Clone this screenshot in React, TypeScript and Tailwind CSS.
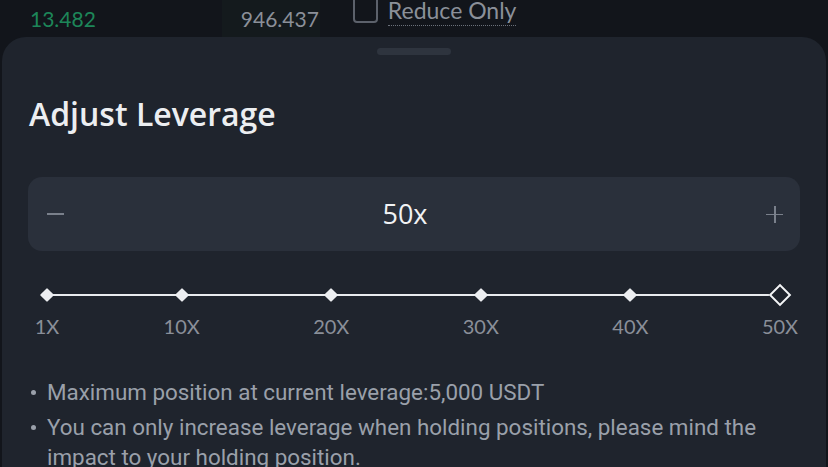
import React from "react";

const marks = [1, 10, 20, 30, 40, 50];

export default function App() {
  const left = 47;
  const right = 780;
  const pos = (v: number) => left + ((v - 1) / 49) * (right - left);
  return (
    <div className="w-[828px] h-[467px] overflow-hidden bg-[#12151b]" style={{ fontFamily: "Lato, 'Noto Sans', sans-serif" }}>
      {/* top strip */}
      <div className="h-[37px] flex items-start relative">
        <div className="ml-[30px] mt-[6px] text-[21px] leading-[26px] text-[#1d8659]">13.482</div>
        <div className="ml-[126px] w-[98px] h-[37px] bg-[#141a1d] flex items-center justify-end pr-[1px] text-[21px] text-[#8b9099]">946.437</div>
        <div className="ml-[33px] -mt-[4px] w-[25px] h-[27px] border-2 border-[#5c616b] rounded-[4px]" />
        <div className="ml-[10px] -mt-[2px] text-[23px] leading-[24px] pb-[3px] text-[#8b9099] border-b border-dotted border-[#6b717b]">Reduce Only</div>
      </div>
      {/* sheet */}
      <div className="mx-[2px] h-[440px] bg-[#1f242d] rounded-t-[24px] flex flex-col">
        <div className="flex justify-center pt-[11px]">
          <div className="w-[74px] h-[7px] rounded-full bg-[#2e343e]" />
        </div>
        <div className="ml-[27px] mt-[41px] text-[32px] leading-[36px] font-semibold text-[#eceef1]" style={{ fontFamily: "'Open Sans', sans-serif" }}>Adjust Leverage</div>
        <div className="mx-[26px] mt-[45px] h-[74px] rounded-[14px] bg-[#2a303b] flex items-center pl-[19px] pr-[17px]">
          <div className="w-[17px] h-[2px] bg-[#7a808b]" />
          <div className="flex-1 text-center pr-[20px] text-[27px] font-medium text-[#f1f2f4]" style={{ fontFamily: "'Open Sans', sans-serif" }}>50x</div>
          <div className="relative w-[17px] h-[17px]">
            <div className="absolute left-0 top-[8px] w-[17px] h-[1.5px] bg-[#7a808b]" />
            <div className="absolute top-0 left-[8px] h-[17px] w-[1.5px] bg-[#7a808b]" />
          </div>
        </div>
        {/* slider */}
        <div className="relative mt-[33px] h-[60px]">
          <div className="absolute top-[10px] h-[2px] bg-[#e9ebee]" style={{ left: left - 2, width: right - left }} />
          {marks.map((m, i) => {
            const x = pos(m) - 2;
            const last = i === marks.length - 1;
            return (
              <React.Fragment key={m}>
                {last ? (
                  <div className="absolute top-[3px] w-[16px] h-[16px] rotate-45 border-2 border-[#f4f5f7] bg-[#1f242d]" style={{ left: x - 8 }} />
                ) : (
                  <div className="absolute top-[6px] w-[10px] h-[10px] rotate-45 bg-[#eceef1] rounded-[1px]" style={{ left: x - 5 }} />
                )}
                <div className="absolute top-[30px] w-[60px] text-center text-[20px] leading-[24px] text-[#8a8f99]" style={{ left: x - 30 }}>
                  {m}X
                </div>
              </React.Fragment>
            );
          })}
        </div>
        <ul className="mt-[33px] ml-[29px] mr-[60px] text-[22.4px] leading-[30px] text-[#9aa0aa]" style={{ fontFamily: "Roboto, sans-serif" }}>
          <li className="flex">
            <span className="w-[16px] shrink-0 h-[30px] flex items-center">
              <span className="block w-[5px] h-[5px] rounded-full bg-[#9aa0aa]" />
            </span>
            <span>Maximum position at current leverage:5,000 USDT</span>
          </li>
          <li className="flex mt-[5px]">
            <span className="w-[16px] shrink-0 h-[30px] flex items-center">
              <span className="block w-[5px] h-[5px] rounded-full bg-[#9aa0aa]" />
            </span>
            <span>You can only increase leverage when holding positions, please mind the impact to your holding position.</span>
          </li>
        </ul>
      </div>
    </div>
  );
}
